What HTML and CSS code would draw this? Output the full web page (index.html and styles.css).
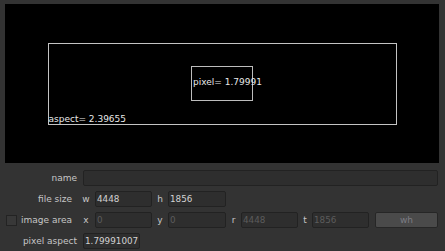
FILE: index.html
```html
<!DOCTYPE html>
<html lang="en">
<head>
    <meta charset="UTF-8">
    <title>Format</title>
    <link rel="stylesheet" href="styles.css">
</head>
<body>
    <div class="viewer">
        <div class="frame">
            <div class="pixel-box">
                <span class="pixel-label">pixel= 1.79991</span>
            </div>
            <span class="aspect-label">aspect= 2.39655</span>
        </div>
    </div>

    <div class="form">
        <div class="row">
            <label class="lbl" for="name">name</label>
            <input class="field wide" type="text" id="name" value="">
        </div>

        <div class="row">
            <span class="lbl short">file size</span>
            <span class="sub sub-w">w</span>
            <input class="field f57" type="text" value="4448">
            <span class="sub sub-h">h</span>
            <input class="field f58" type="text" value="1856">
        </div>

        <div class="row">
            <label class="lbl check-lbl">
                <span class="check"></span>
                <span>image area</span>
            </label>
            <span class="sub sub-w">x</span>
            <input class="field f57" type="text" value="0" disabled>
            <span class="sub sub-h">y</span>
            <input class="field f58" type="text" value="0" disabled>
            <span class="sub sub-r">r</span>
            <input class="field f57" type="text" value="4448" disabled>
            <span class="sub sub-t">t</span>
            <input class="field f57" type="text" value="1856" disabled>
            <button class="btn" disabled>wh</button>
        </div>

        <div class="row">
            <label class="lbl" for="pa">pixel aspect</label>
            <input class="field f57" type="text" id="pa" value="1.79991007">
        </div>
    </div>
</body>
</html>
```

FILE: styles.css
```css
body {
    margin: 0;
    background-color: #333333;
    font-family: "DejaVu Sans", Verdana, sans-serif;
    font-size: 9px;
    color: #c6c6c6;
}
.viewer {
    margin: 4px 6px 0 5px;
    height: 159px;
    background: #000;
    display: flex;
    align-items: center;
    justify-content: center;
}
.frame {
    position: relative;
    width: 347px;
    height: 80px;
    border: 1px solid #c4c4c4;
    display: flex;
    align-items: center;
    justify-content: center;
}
.pixel-box {
    width: 62px;
    height: 35px;
    box-sizing: border-box;
    border: 1px solid #bdbdbd;
    display: flex;
    align-items: center;
    padding-bottom: 4px;
}
.pixel-label {
    color: #e8e8e8;
    white-space: nowrap;
    margin-left: 1px;
}
.aspect-label {
    position: absolute;
    left: 0;
    bottom: 0;
    color: #e8e8e8;
    white-space: nowrap;
}
.form {
    padding-top: 7px;
    display: flex;
    flex-direction: column;
    gap: 5px;
}
.row {
    display: flex;
    align-items: center;
    height: 16px;
}
.lbl {
    width: 77px;
    flex: none;
    text-align: right;
    box-sizing: border-box;
    margin-right: 6px;
}
.lbl.short {
    padding-right: 5px;
    margin-right: 0;
}
.check-lbl {
    display: flex;
    align-items: center;
    padding-left: 6px;
    padding-right: 5px;
    margin-right: 0;
    text-align: left;
}
.check {
    width: 9px;
    height: 9px;
    border: 1px solid #232323;
    background: #383838;
    margin-right: 4px;
}
.sub {
    flex: none;
    text-align: center;
}
.sub-w { width: 18px; }
.sub-h { width: 16px; }
.sub-r { width: 15px; }
.sub-t { width: 14px; }
.field {
    flex: none;
    height: 16px;
    box-sizing: border-box;
    border: 1px solid #222222;
    border-radius: 2px;
    background: #2e2e2e;
    color: #d2d2d2;
    font-family: inherit;
    font-size: 8.8px;
    padding: 0 0 0 1px;
    outline: none;
}
.field:disabled {
    color: #5c5c5c;
}
.wide { width: 355px; }
.f57 { width: 57px; }
.f58 { width: 58px; }
.btn {
    flex: none;
    margin-left: 6px;
    width: 63px;
    height: 16px;
    box-sizing: border-box;
    border: 1px solid #262626;
    border-radius: 2px;
    background: #4a4a4a;
    color: #7c7c84;
    font-family: inherit;
    font-size: 9px;
    padding: 0;
}
```
